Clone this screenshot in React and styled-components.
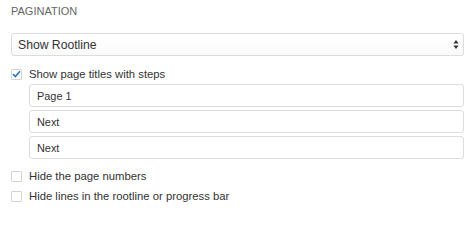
import React from "react";
import styled, { createGlobalStyle } from "styled-components";

const Global = createGlobalStyle`
  html, body { margin: 0; padding: 0; background: #fff; }
  body { font-family: "Liberation Sans", Arial, sans-serif; color: #333; }
`;

const Panel = styled.div`
  width: 474px;
  height: 218px;
  box-sizing: border-box;
  padding: 6px 10px 0 11px;
  display: flex;
  flex-direction: column;
`;

const Heading = styled.div`
  font-size: 11px;
  color: #666;
  line-height: 10px;
  height: 10px;
  margin-bottom: 17px;
`;

const SelectBox = styled.div`
  position: relative;
  height: 23px;
  box-sizing: border-box;
  border: 1px solid #dcdcdc;
  border-radius: 3px;
  background: linear-gradient(#fff, #fafafa);
  display: flex;
  align-items: center;
  padding-left: 6px;
  font-size: 12.2px;
  color: #333;
  margin-bottom: 12px;
`;

const Arrows = styled.svg`
  position: absolute;
  right: 4px;
  top: 50%;
  transform: translateY(-55%);
`;

const CheckRow = styled.label`
  display: flex;
  align-items: center;
  gap: 7px;
  height: 12px;
  font-size: 11.3px;
  color: #333;
  margin-bottom: ${(p) => p.$mb || 0}px;
`;

const Box = styled.span`
  width: 11px;
  height: 11px;
  box-sizing: border-box;
  border: 1px solid #d4d4d4;
  border-radius: 1px;
  background: #fff;
  display: flex;
  align-items: center;
  justify-content: center;
  flex-shrink: 0;
`;

const Inputs = styled.div`
  display: flex;
  flex-direction: column;
  gap: 3px;
  padding-left: 18px;
  margin-bottom: 11px;
`;

const Input = styled.div`
  height: 23px;
  box-sizing: border-box;
  border: 1px solid #dcdcdc;
  border-radius: 3px;
  background: #fff;
  display: flex;
  align-items: center;
  padding-left: 7px;
  font-size: 10.9px;
  color: #333;
`;

function Checkbox({ checked }) {
  return (
    <Box>
      {checked && (
        <svg width="9" height="8" viewBox="0 0 9 8">
          <path d="M1 4.2 L3.4 6.5 L8 1.2" fill="none" stroke="#2b78c5" strokeWidth="1.6" />
        </svg>
      )}
    </Box>
  );
}

export default function App() {
  return (
    <>
      <Global />
      <Panel>
        <Heading>PAGINATION</Heading>
        <SelectBox>
          Show Rootline
          <Arrows width="6" height="10" viewBox="0 0 6 10">
            <path d="M3 0.5 L5.6 4 L0.4 4 Z" fill="#333" />
            <path d="M3 9.5 L5.6 6 L0.4 6 Z" fill="#333" />
          </Arrows>
        </SelectBox>
        <CheckRow $mb={4}>
          <Checkbox checked />
          Show page titles with steps
        </CheckRow>
        <Inputs>
          <Input>Page 1</Input>
          <Input>Next</Input>
          <Input>Next</Input>
        </Inputs>
        <CheckRow $mb={8}>
          <Checkbox />
          Hide the page numbers
        </CheckRow>
        <CheckRow>
          <Checkbox />
          Hide lines in the rootline or progress bar
        </CheckRow>
      </Panel>
    </>
  );
}
